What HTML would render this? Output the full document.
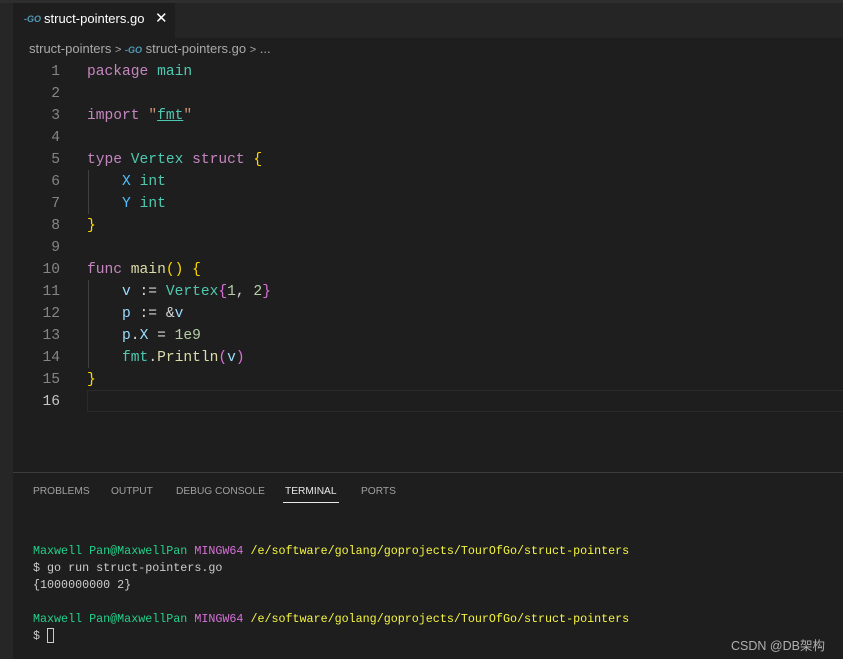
<!DOCTYPE html>
<html><head><meta charset="utf-8"><style>
*{margin:0;padding:0;box-sizing:border-box}
body{width:843px;height:659px;background:#1e1e1e;position:relative;overflow:hidden;font-family:"Liberation Sans",sans-serif}
.abs{position:absolute;white-space:pre}
.code{font-family:"Liberation Mono",monospace;font-size:14.6px;line-height:22px}
.term{font-family:"Liberation Mono",monospace;font-size:11.7px;line-height:17px;color:#cccccc}
.k{color:#c586c0}.t{color:#4ec9b0}.y{color:#ffd700}.v{color:#9cdcfe}.n{color:#b5cea8}.f{color:#dcdcaa}.s{color:#ce9178}.w{color:#d4d4d4}.p{color:#da70d6}
.ln{color:#858585;width:47px;text-align:right;left:13px}
.pt{font-size:10.2px;top:486px}
</style></head><body>
<div class="abs" style="left:0;top:0;width:843px;height:3px;background:#2e2e2e"></div>
<div class="abs" style="left:0;top:3px;width:13px;height:656px;background:#262626"></div>
<div class="abs" style="left:13px;top:3px;width:830px;height:35px;background:#252526"></div>
<div class="abs" style="left:13px;top:3px;width:162px;height:35px;background:#1e1e1e"></div>
<div class="abs" style="left:24px;top:14px;font-size:9px;font-weight:bold;font-style:italic;color:#519aba">-GO</div>
<div class="abs" style="left:44px;top:11px;font-size:13px;color:#ffffff">struct-pointers.go</div>
<div class="abs" style="left:155px;top:9px;font-size:15px;color:#ffffff">✕</div>
<div class="abs" style="left:29px;top:41px;font-size:13px;color:#a9a9a9">struct-pointers <span style="font-size:11px">&gt;</span> <span style="font-size:9px;font-weight:bold;font-style:italic;color:#519aba">-GO</span> struct-pointers.go <span style="font-size:11px">&gt;</span> ...</div>

<div class="abs" style="left:87px;top:390px;width:756px;height:22px;border:1px solid #2b2b2b;border-right:none"></div>
<div class="abs" style="left:88px;top:170px;width:1px;height:44px;background:#404040"></div>
<div class="abs" style="left:88px;top:280px;width:1px;height:88px;background:#404040"></div>

<div class="abs code ln" style="top:61px">1
2
3
4
5
6
7
8
9
10
11
12
13
14
15
<span style="color:#c6c6c6">16</span></div>
<div class="abs code w" style="left:87px;top:61px"><span class="k">package</span> <span class="t">main</span>

<span class="k">import</span> <span class="s">"<span class="t" style="text-decoration:underline">fmt</span>"</span>

<span class="k">type</span> <span class="t">Vertex</span> <span class="k">struct</span> <span class="y">{</span>
    <span style="color:#4fc1ff">X</span> <span class="t">int</span>
    <span style="color:#4fc1ff">Y</span> <span class="t">int</span>
<span class="y">}</span>

<span class="k">func</span> <span class="f">main</span><span class="y">()</span> <span class="y">{</span>
    <span class="v">v</span> := <span class="t">Vertex</span><span class="p">{</span><span class="n">1</span>, <span class="n">2</span><span class="p">}</span>
    <span class="v">p</span> := &amp;<span class="v">v</span>
    <span class="v">p</span>.<span class="v">X</span> = <span class="n">1e9</span>
    <span class="t">fmt</span>.<span class="f">Println</span><span class="p">(</span><span class="v">v</span><span class="p">)</span>
<span class="y">}</span>
</div>

<div class="abs" style="left:13px;top:472px;width:830px;height:1px;background:#3c3c3c"></div>
<div class="abs pt" style="left:33px;color:#a0a0a0">PROBLEMS</div>
<div class="abs pt" style="left:111px;color:#a0a0a0">OUTPUT</div>
<div class="abs pt" style="left:176px;color:#a0a0a0">DEBUG CONSOLE</div>
<div class="abs pt" style="left:285px;color:#e7e7e7">TERMINAL</div>
<div class="abs" style="left:283px;top:502px;width:56px;height:1px;background:#e7e7e7"></div>
<div class="abs pt" style="left:361px;color:#a0a0a0">PORTS</div>

<div class="abs term" style="left:33px;top:543px"><span style="color:#23d18b">Maxwell Pan@MaxwellPan</span> <span style="color:#d670d6">MINGW64</span> <span style="color:#f5f543">/e/software/golang/goprojects/TourOfGo/struct-pointers</span>
$ go run struct-pointers.go
{1000000000 2}

<span style="color:#23d18b">Maxwell Pan@MaxwellPan</span> <span style="color:#d670d6">MINGW64</span> <span style="color:#f5f543">/e/software/golang/goprojects/TourOfGo/struct-pointers</span>
$ </div>
<div class="abs" style="left:47px;top:628px;width:7px;height:15px;border:1px solid #cccccc"></div>
<div class="abs" style="left:731px;top:635px;font-size:12.5px;color:#b0b0b0;font-family:'Liberation Sans','Noto Sans CJK SC',sans-serif">CSDN @DB架构</div>
</body></html>
